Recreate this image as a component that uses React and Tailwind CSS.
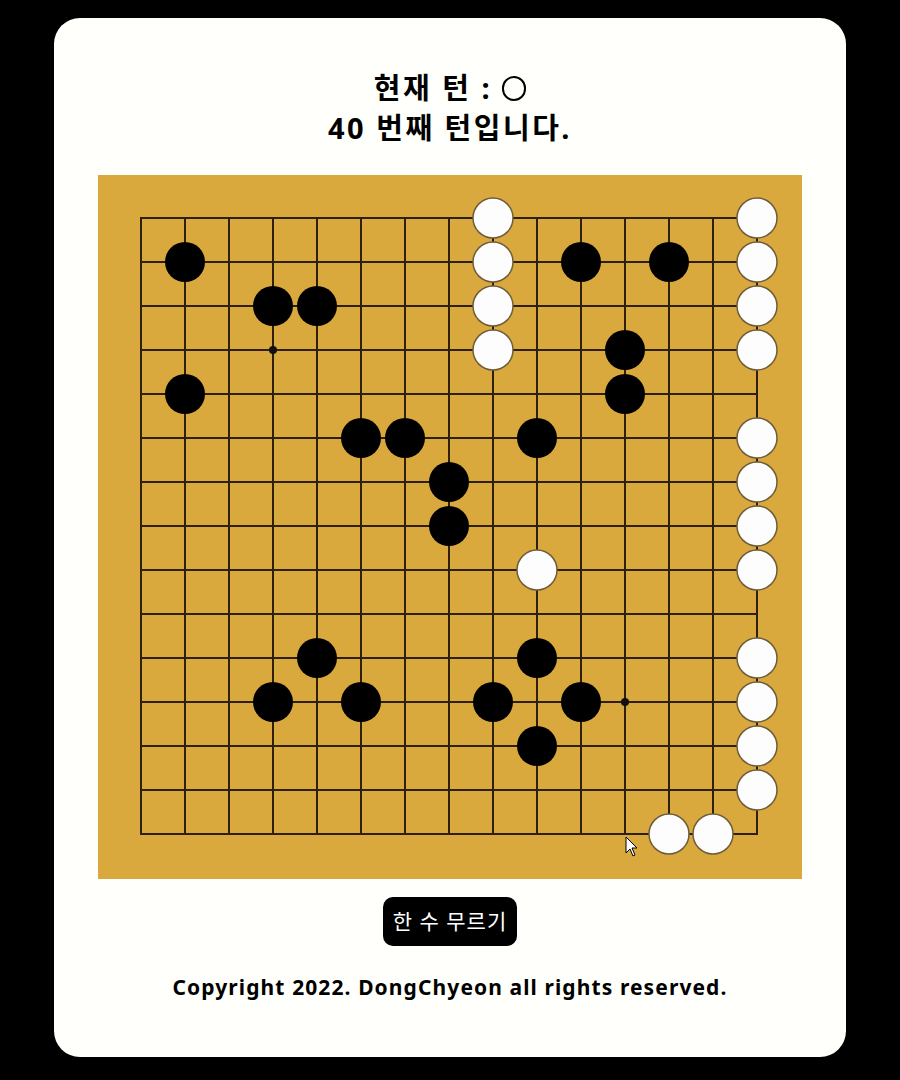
import React from "react";

const SIZE = 15;
const GAP = 44;
const OFFSET = 43;

const blackStones = [
  [1, 1], [10, 1], [12, 1],
  [3, 2], [4, 2],
  [11, 3],
  [1, 4], [11, 4],
  [5, 5], [6, 5], [9, 5],
  [7, 6], [7, 7],
  [4, 10], [9, 10],
  [3, 11], [5, 11], [8, 11], [10, 11],
  [9, 12],
];

const whiteStones = [
  [8, 0], [8, 1], [8, 2], [8, 3],
  [14, 0], [14, 1], [14, 2], [14, 3],
  [14, 5], [14, 6], [14, 7], [14, 8],
  [14, 10], [14, 11], [14, 12], [14, 13],
  [12, 14], [13, 14],
  [9, 8],
];

const starPoints = [
  [3, 3], [11, 3], [7, 7], [3, 11], [11, 11],
];

const pos = (i) => OFFSET + GAP * i;

const Board = () => {
  const end = pos(SIZE - 1);
  return (
    <div className="relative w-[704px] h-[704px] bg-[#d9a93d] mx-auto">
      <svg width="704" height="704" className="block">
        {Array.from({ length: SIZE }).map((_, i) => (
          <g key={i}>
            <line x1={pos(i)} y1={OFFSET - 1} x2={pos(i)} y2={end + 1} stroke="#2e200a" strokeWidth="2" />
            <line x1={OFFSET - 1} y1={pos(i)} x2={end + 1} y2={pos(i)} stroke="#2e200a" strokeWidth="2" />
          </g>
        ))}
        {starPoints.map(([c, r]) => (
          <circle key={`s${c}-${r}`} cx={pos(c)} cy={pos(r)} r="4" fill="#111" />
        ))}
        {blackStones.map(([c, r]) => (
          <circle key={`b${c}-${r}`} cx={pos(c)} cy={pos(r)} r="20" fill="#000" />
        ))}
        {whiteStones.map(([c, r]) => (
          <circle key={`w${c}-${r}`} cx={pos(c)} cy={pos(r)} r="20" fill="#fdfdfd" stroke="#6e5c3a" strokeWidth="1.5" />
        ))}
      </svg>
      {/* mouse cursor */}
      <svg width="14" height="22" viewBox="0 0 14 22" className="absolute left-[527px] top-[661px]">
        <path d="M1 1 L1 17 L5 13 L8 20 L10 19 L7 12 L12 12 Z" fill="#fff" stroke="#000" strokeWidth="1" strokeLinejoin="round" />
      </svg>
    </div>
  );
};

const App = () => {
  return (
    <div className="min-h-screen bg-black pt-[18px] pb-[24px]" style={{ fontFamily: '"Noto Sans", "Noto Sans CJK KR", sans-serif' }}>
      <div className="w-[792px] mx-auto bg-[#fffffb] rounded-[26px] pt-[50px] pb-[56px]">
        <div className="text-center font-bold text-[29px] leading-[40px] tracking-[2.5px] text-black">
          <div className="flex items-center justify-center gap-[10px]">
            <span>현재 턴 :</span>
            <span className="inline-block w-[24px] h-[25px] rounded-full border-[2px] border-black" />
          </div>
          <div>40 번째 턴입니다.</div>
        </div>
        <div className="mt-[27px]">
          <Board />
        </div>
        <div className="flex justify-center mt-[18px]">
          <button className="bg-black text-white text-[21px] leading-[29px] tracking-[1px] px-[10px] py-[10px] rounded-[10px]">
            한 수 무르기
          </button>
        </div>
        <p className="text-center font-bold text-[21px] leading-[28px] tracking-[1.1px] mt-[27px] text-black">
          Copyright 2022. DongChyeon all rights reserved.
        </p>
      </div>
    </div>
  );
};

export default App;
